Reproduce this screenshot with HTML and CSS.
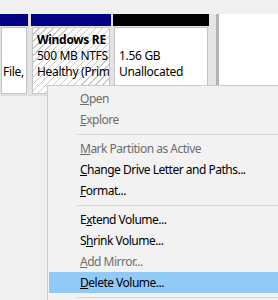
FILE: index.html
```html
<!DOCTYPE html>
<html lang="en">
<head>
    <meta charset="UTF-8">
    <title>Disk Management</title>
    <link rel="stylesheet" href="styles.css">
</head>
<body>

<!-- Disk map -->
<div class="disk-pane">
    <div class="prev-row"></div>
    <div class="disk-row">
        <div class="parts">
            <div class="part part-c">
                <div class="part-bar bar-primary"></div>
                <div class="part-body">
                    <div class="box">
                        <div class="line">&nbsp;</div>
                        <div class="line">&nbsp;</div>
                        <div class="line line-end"><span>Healthy (Boot, Page File,</span></div>
                    </div>
                </div>
            </div>
            <div class="part part-re">
                <div class="part-bar bar-primary"></div>
                <div class="part-body">
                    <div class="box box-selected">
                        <div class="line name">Windows RE</div>
                        <div class="line">500 MB NTFS</div>
                        <div class="line">Healthy (Primary Partition)</div>
                    </div>
                </div>
            </div>
            <div class="part part-free">
                <div class="part-bar bar-free"></div>
                <div class="part-body">
                    <div class="box">
                        <div class="line">&nbsp;</div>
                        <div class="line">1.56 GB</div>
                        <div class="line">Unallocated</div>
                    </div>
                </div>
            </div>
        </div>
        <div class="splitter"></div>
        <div class="pane-rest"></div>
    </div>
</div>

<!-- Context menu -->
<div class="menu">
    <div class="item disabled"><u>O</u>pen</div>
    <div class="item disabled"><u>E</u>xplore</div>
    <div class="sep"></div>
    <div class="item disabled"><u>M</u>ark Partition as Active</div>
    <div class="item"><u>C</u>hange Drive Letter and Paths...</div>
    <div class="item"><u>F</u>ormat...</div>
    <div class="sep"></div>
    <div class="item">E<u>x</u>tend Volume...</div>
    <div class="item">S<u>h</u>rink Volume...</div>
    <div class="item disabled"><u>A</u>dd Mirror...</div>
    <div class="item active"><u>D</u>elete Volume...</div>
    <div class="sep"></div>
</div>

</body>
</html>
```

FILE: styles.css
```css
body {
    font-family: "Noto Sans", "Open Sans", sans-serif;
    font-size: 12px;
    margin: 0;
    width: 278px;
    height: 300px;
    overflow: hidden;
    background-color: #f0f0f0;
    position: relative;
}

/* Disk map */
.disk-pane {
    height: 95px;
    display: flex;
    flex-direction: column;
    border-bottom: 1px solid #dcdcdc;
}
.prev-row {
    height: 14px;
    border-top: 1px solid #f0f0f0;
    box-sizing: border-box;
    background-color: #f0f0f0;
}
.disk-row {
    flex: 1;
    display: flex;
}
.parts {
    display: flex;
    width: 209px;
    background-color: #e3e3e3;
}
.part {
    display: flex;
    flex-direction: column;
}
.part-c {
    width: 28px;
    margin-right: 3px;
}
.part-re {
    width: 80px;
    margin-right: 2px;
}
.part-free {
    width: 96px;
}
.part-bar {
    height: 12px;
}
.bar-primary {
    background-color: #000080;
}
.bar-free {
    background-color: #000000;
}
.part-body {
    flex: 1;
    padding: 1px;
    display: flex;
}
.box {
    flex: 1;
    min-width: 0;
    overflow: hidden;
    background-color: #ffffff;
    border: 1px solid #c4c4c4;
    padding: 4px 0 0 4px;
    white-space: nowrap;
    letter-spacing: -0.3px;
}
.part-c .box {
    padding: 4px 2px 0 0;
}
.box-selected {
    background-color: #ffffff;
    background-image: repeating-linear-gradient(135deg, #ffffff 0, #ffffff 4px, #c9c9c9 4px, #c9c9c9 5px);
}
.line {
    height: 16px;
    line-height: 16px;
    color: #000000;
}
.line.name {
    font-weight: bold;
}
.line-end {
    display: flex;
    justify-content: flex-end;
}
.splitter {
    width: 10px;
    background-color: #e6e6e6;
    border-right: 3px solid #b4b4b4;
    box-sizing: border-box;
}
.pane-rest {
    flex: 1;
    background-color: #ffffff;
}

/* Context menu */
.menu {
    position: absolute;
    left: 47px;
    top: 85px;
    width: 240px;
    background-color: #f2f2f2;
    border: 1px solid #cccccc;
    padding: 2px 0 2px 1px;
    box-shadow: 2px 2px 3px rgba(0, 0, 0, 0.2);
}
.item {
    height: 21px;
    line-height: 21px;
    padding-left: 31px;
    color: #000000;
    white-space: nowrap;
    letter-spacing: -0.5px;
}
.item.disabled {
    color: #6d6d6d;
}
.item.active {
    background-color: #91c9f7;
}
.sep {
    height: 8px;
    margin-left: 28px;
    display: flex;
    align-items: center;
}
.sep::before {
    content: "";
    flex: 1;
    border-top: 1px solid #d7d7d7;
}
```
